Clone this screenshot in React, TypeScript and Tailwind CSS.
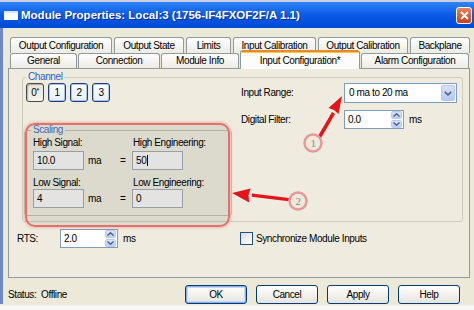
import React from "react";

type TabItem = { label: string; w: string; active?: boolean };

const backRow: TabItem[] = [
  { label: "Output Configuration", w: "w-[102px]" },
  { label: "Output State", w: "w-[70px]" },
  { label: "Limits", w: "w-[45px]" },
  { label: "Input Calibration", w: "w-[83px]" },
  { label: "Output Calibration", w: "w-[90px]" },
  { label: "Backplane", w: "w-[60px]" },
];

const frontRow: TabItem[] = [
  { label: "General", w: "w-[67px]" },
  { label: "Connection", w: "w-[82px]" },
  { label: "Module Info", w: "w-[78px]" },
  { label: "Input Configuration*", w: "w-[120px]", active: true },
  { label: "Alarm Configuration", w: "w-[108px]" },
];

function Tab({ label, w, active }: TabItem) {
  if (active) {
    return (
      <div className={`${w} relative z-10 -mt-[3px] flex h-[19px] flex-col rounded-t-[3px] border-x border-[#919b9c] bg-[#fcfcfa]`}>
        <div className="h-[2px] rounded-t-[2px] bg-[#e68b2c]" />
        <div className="h-[1px] bg-[#ffc73c]" />
        <div className="flex flex-1 items-center justify-center pb-[1px]">{label}</div>
      </div>
    );
  }
  return (
    <div className={`${w} flex h-full items-center justify-center rounded-t-[3px] border border-b-0 border-[#919b9c] bg-linear-to-b from-[#ffffff] to-[#ecebe5]`}>
      {label}
    </div>
  );
}

function Spin({ value, w }: { value: string; w: string }) {
  return (
    <div className={`${w} flex h-[19px] items-center border border-[#7f9db9] bg-white`}>
      <span className="flex-1 pl-[3px]">{value}</span>
      <div className="mr-[1px] flex h-[17px] w-[11px] flex-col gap-[1px]">
        <SpinHalf up />
        <SpinHalf />
      </div>
    </div>
  );
}

function SpinHalf({ up }: { up?: boolean }) {
  return (
    <div className="flex flex-1 items-center justify-center rounded-[2px] border border-[#b8c9f2] bg-linear-to-b from-[#d6e2fc] to-[#b9cdf6]">
      <svg width="7" height="4" viewBox="0 0 7 4">
        <path d={up ? "M0.5 3.5 L3.5 0.8 L6.5 3.5" : "M0.5 0.5 L3.5 3.2 L6.5 0.5"} fill="none" stroke="#4d6185" strokeWidth="1.4" />
      </svg>
    </div>
  );
}

function ScaleBox({ value, caret }: { value: string; caret?: boolean }) {
  return (
    <div className="flex h-[19px] items-center border border-[#a5acb5] bg-[#f7f7f5] pl-[3px]">
      {value}
      {caret && <span className="ml-[1px] h-[11px] w-[1px] bg-black" />}
    </div>
  );
}

function ChannelButton({ label, current }: { label: string; current?: boolean }) {
  return current ? (
    <div className="flex h-[19px] w-[18px] items-center justify-center rounded-[3px] border border-[#4a4a48] bg-linear-to-b from-[#e6e4da] to-[#f4f3ee] shadow-[inset_1px_1px_1px_rgba(0,0,0,0.25)]">
      0<span className="-mt-[4px] text-[7px]">*</span>
    </div>
  ) : (
    <div className="flex h-[19px] w-[18px] items-center justify-center rounded-[3px] border border-[#1f3f78] bg-linear-to-b from-[#ffffff] to-[#e9eef8] shadow-[inset_0_0_0_1px_#a9c2ee]">
      {label}
    </div>
  );
}

function DialogButton({ label, isDefault }: { label: string; isDefault?: boolean }) {
  return (
    <div
      className={`flex h-[19px] w-[62px] items-center justify-center rounded-[3px] border border-[#003c74] bg-linear-to-b from-[#ffffff] to-[#e6e4dc] ${
        isDefault ? "shadow-[inset_0_0_0_1px_#89aeea,inset_0_0_0_2px_#c8d8f6]" : ""
      }`}
    >
      {label}
    </div>
  );
}

export default function App() {
  return (
    <div className="relative h-[310px] w-[474px] overflow-hidden bg-[#ece9d8] font-['Liberation_Sans',Arial,sans-serif] text-[10px] leading-[12px] tracking-[-0.4px] text-black">
      {/* Title bar */}
      <div className="flex h-[28px] items-center justify-between border-t-2 border-[#c9cfdc] bg-linear-to-b from-[#2f84f4] via-[#0a5ae6] to-[#0049d4]">
        <div className="flex items-center">
          <div className="ml-[4px] h-[9px] w-[14px] border-t-2 border-[#d8e4fb] bg-white" />
          <span className="ml-[3px] text-[11.5px] font-bold tracking-normal text-white [text-shadow:1px_1px_0_#0a2f8c]">
            Module Properties: Local:3 (1756-IF4FXOF2F/A 1.1)
          </span>
        </div>
        <div className="mr-[2px] flex h-[17px] w-[16px] items-center justify-center rounded-[3px] border border-white bg-linear-to-b from-[#e8825f] to-[#c8401c]">
          <svg width="9" height="9" viewBox="0 0 9 9">
            <path d="M1 1 L8 8 M8 1 L1 8" stroke="white" strokeWidth="1.8" />
          </svg>
        </div>
      </div>

      {/* Window body */}
      <div className="border-l-[3px] border-[#7088c6]">
        <div className="pt-[9px] pl-[7px]">
          <div className="flex h-[16px] gap-[2px]">
            {backRow.map((t) => (
              <Tab key={t.label} {...t} />
            ))}
          </div>
          <div className="flex h-[15px] items-start gap-[1px]">
            {frontRow.map((t) => (
              <Tab key={t.label} {...t} />
            ))}
          </div>
        </div>

        {/* Tab page */}
        <div className="ml-[5px] h-[210px] w-[462px] border border-[#919b9c] bg-[#efecdf] pt-[2px] pl-[8px]">
          <fieldset className="ml-[5px] w-[441px] rounded-[3px] border border-[#cfcdbd] pb-[5px]">
            <legend className="ml-[3px] px-[2px] text-[#2a5bd0]">Channel</legend>
            <div className="flex">
              <div className="w-[218px]">
                <div className="ml-[3px] flex gap-[4px]">
                  <ChannelButton label="0" current />
                  <ChannelButton label="1" />
                  <ChannelButton label="2" />
                  <ChannelButton label="3" />
                </div>
                <fieldset className="mt-[22px] ml-[1px] w-[208px] rounded-[3px] border border-[#c3c1b3] pb-[7px] pl-[8px]">
                  <legend className="-ml-[2px] px-[2px] text-[#4a72d0]">Scaling</legend>
                  <div className="grid grid-cols-[51px_36px_12px_51px]">
                    <div className="col-span-3 h-[14px] leading-[14px]">High Signal:</div>
                    <div className="h-[14px] whitespace-nowrap pl-[1px] leading-[14px]">High Engineering:</div>
                    <div className="mt-[1px]">
                      <ScaleBox value="10.0" />
                    </div>
                    <div className="mt-[1px] flex items-center pl-[4px]">ma</div>
                    <div className="mt-[1px] flex items-center">=</div>
                    <div className="mt-[1px]">
                      <ScaleBox value="50" caret />
                    </div>
                    <div className="col-span-3 mt-[6px] h-[13px] leading-[13px]">Low Signal:</div>
                    <div className="mt-[6px] h-[13px] whitespace-nowrap pl-[1px] leading-[13px]">Low Engineering:</div>
                    <ScaleBox value="4" />
                    <div className="flex items-center pl-[4px]">ma</div>
                    <div className="flex items-center">=</div>
                    <ScaleBox value="0" />
                  </div>
                </fieldset>
              </div>

              <div className="flex-1">
                <div className="flex h-[20px] items-center">
                  <span className="w-[103px]">Input Range:</span>
                  <div className="flex h-[20px] w-[113px] items-center border border-[#7f9db9] bg-white">
                    <span className="flex-1 pl-[4px]">0 ma to 20 ma</span>
                    <div className="mr-[1px] flex h-[16px] w-[14px] items-center justify-center rounded-[2px] border border-[#b8c9f2] bg-linear-to-b from-[#d6e2fc] to-[#b4c8f5]">
                      <svg width="8" height="5" viewBox="0 0 8 5">
                        <path d="M0.8 0.8 L4 3.8 L7.2 0.8" fill="none" stroke="#4d6185" strokeWidth="1.6" />
                      </svg>
                    </div>
                  </div>
                </div>
                <div className="mt-[7px] flex h-[19px] items-center">
                  <span className="w-[103px]">Digital Filter:</span>
                  <Spin value="0.0" w="w-[60px]" />
                  <span className="ml-[5px]">ms</span>
                </div>
              </div>
            </div>
          </fieldset>

          <div className="mt-[7px] flex h-[19px] items-center">
            <div className="flex w-[223px] items-center">
              <span className="w-[43px]">RTS:</span>
              <Spin value="2.0" w="w-[58px]" />
              <span className="ml-[5px]">ms</span>
            </div>
            <div className="h-[13px] w-[13px] border border-[#1c5180] bg-linear-to-br from-[#dcdcd7] to-[#ffffff]" />
            <span className="ml-[3px]">Synchronize Module Inputs</span>
          </div>
        </div>

        {/* Status and buttons */}
        <div className="flex items-center pt-[7px] pl-[5px]">
          <div className="w-[177px]">
            Status:&nbsp; Offline
          </div>
          <div className="flex gap-[9px]">
            <DialogButton label="OK" isDefault />
            <DialogButton label="Cancel" />
            <DialogButton label="Apply" />
            <DialogButton label="Help" />
          </div>
        </div>
      </div>
      <div className="mt-[1px] h-[6px] bg-[#f6f6f4]" />

      {/* Annotation: highlight around scaling */}
      <div className="pointer-events-none absolute top-[123px] left-[25px] h-[104px] w-[205px] rounded-[10px] border-2 border-[#e2706c] bg-black/[0.08] shadow-[0_0_3px_1px_rgba(230,120,120,0.45)]" />

      {/* Annotation: arrows and numbers */}
      <svg className="pointer-events-none absolute top-0 left-0" width="474" height="310" viewBox="0 0 474 310">
        <g fill="#e3151b" stroke="none">
          <path d="M318 136 L332 112 L335 114 L321 138 Z" />
          <path d="M342 96 L338.5 114 L334 110 L328.5 108 Z" />
          <path d="M289 198 L252 193.5 L251.6 196.7 L288.6 201.2 Z" />
          <path d="M232 193 L250.6 188.4 L248.5 195.2 L249.2 202.5 Z" />
        </g>
        <g fill="#eee9dc" stroke="#e59a98" strokeWidth="2.5">
          <circle cx="313" cy="143" r="8.5" />
          <circle cx="298" cy="201" r="8.5" />
        </g>
        <g fill="#8c8c8c" fontFamily="'Liberation Serif', serif" fontSize="11" textAnchor="middle">
          <text x="313" y="147">1</text>
          <text x="298" y="205">2</text>
        </g>
      </svg>
    </div>
  );
}
